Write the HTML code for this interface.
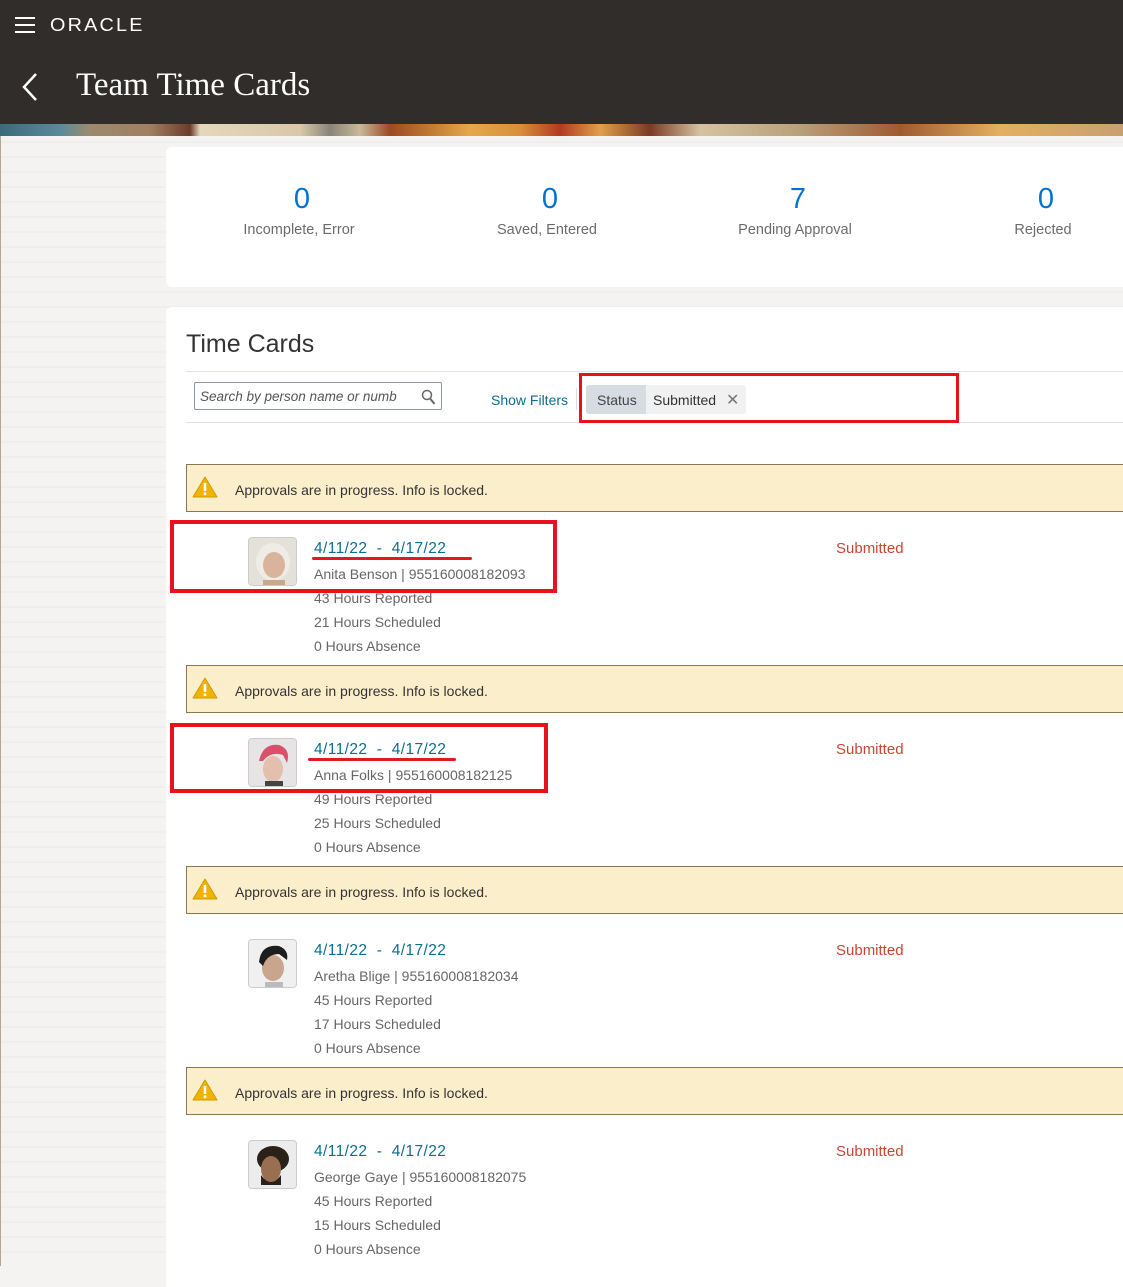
<!DOCTYPE html>
<html><head><meta charset="utf-8"><style>
*{margin:0;padding:0;box-sizing:border-box}
body{width:1123px;height:1266px;overflow:hidden;position:relative;background:#f4f3f1;font-family:"Liberation Sans",sans-serif;color:#555}
.bgtex{left:0;top:136px;width:1123px;height:1130px;background-image:repeating-linear-gradient(0deg,transparent 0 13px,rgba(0,0,0,0.018) 13px 15px)}
.a{position:absolute}
.hdr{left:0;top:0;width:1123px;height:124px;background:#312d2a}
.ban{left:0;top:124px;width:1123px;height:12px;background:linear-gradient(90deg,#3d6a7a 0,#5a8a99 60px,#9c8a6e 90px,#a08060 150px,#6b3b2a 190px,#e3d7bd 200px,#d8c8a8 300px,#8a8478 330px,#c9b89a 360px,#9b4a24 390px,#c07a32 430px,#e6a84a 470px,#d88f3a 520px,#b23a22 560px,#e0a04a 600px,#7a3a24 650px,#d4c3a0 700px,#b8a07a 800px,#a05a30 900px,#e3b060 1000px,#c8a070 1123px)}
.card{background:#fff;border-radius:6px}
.num{font-size:29px;color:#0572ce;width:200px;text-align:center}
.lbl{font-size:14.5px;color:#6b6b6b;width:200px;text-align:center}
.alert{left:186px;width:950px;height:48px;background:#fbeecb;border-top:1px solid #8a7650;border-bottom:1px solid #8a7650;border-left:1px solid #8a7650;font-size:14px;color:#333}
.alert span{position:absolute;left:48px;top:17px}
.av{width:49px;height:49px;border:1px solid #ccc;border-radius:4px;background:#e8e8e8;overflow:hidden}
.dt{font-size:15.5px;color:#0b6e8c;letter-spacing:0.4px}
.t{font-size:14px;color:#666}
.st{font-size:15px;color:#c74634}
.rb{border:3px solid #e8111c}
.ul{height:3px;background:#e01a22;border-radius:2px}
</style></head><body>
<div class="a bgtex"></div>
<div class="a hdr"></div>
<svg class="a" style="left:14px;top:16px" width="22" height="18"><path d="M1 2h20M1 9h20M1 16h20" stroke="#fff" stroke-width="2"/></svg>
<div class="a" style="left:50px;top:15px;color:#fff;font-size:18px;letter-spacing:2px;transform:scaleX(1.1);transform-origin:left">ORACLE</div>
<svg class="a" style="left:20px;top:72px" width="20" height="30"><path d="M16 2L4 15l12 13" stroke="#fff" stroke-width="2.5" fill="none"/></svg>
<div class="a" style="left:76px;top:67px;color:#fff;font-family:'Liberation Serif',serif;font-size:33px">Team Time Cards</div>
<div class="a ban"></div>
<div class="a" style="left:0;top:136px;width:1px;height:1130px;background:#b0a890"></div>

<div class="a card" style="left:166px;top:147px;width:970px;height:140px"></div>
<div class="a num" style="left:202px;top:183px">0</div><div class="a lbl" style="left:199px;top:222px">Incomplete, Error</div>
<div class="a num" style="left:450px;top:183px">0</div><div class="a lbl" style="left:447px;top:222px">Saved, Entered</div>
<div class="a num" style="left:698px;top:183px">7</div><div class="a lbl" style="left:695px;top:222px">Pending Approval</div>
<div class="a num" style="left:946px;top:183px">0</div><div class="a lbl" style="left:943px;top:222px">Rejected</div>

<div class="a card" style="left:166px;top:307px;width:970px;height:980px;border-radius:6px 0 0 0"></div>
<div class="a" style="left:186px;top:330px;font-size:25px;color:#333">Time Cards</div>
<div class="a" style="left:186px;top:371px;width:940px;height:1px;background:#dfe3e6"></div>
<div class="a" style="left:186px;top:422px;width:940px;height:1px;background:#dfe3e6"></div>
<div class="a" style="left:194px;top:382px;width:248px;height:28px;border:1px solid #8a96a0;border-radius:2px"></div>
<div class="a" style="left:200px;top:389px;font-size:13.5px;font-style:italic;color:#555">Search by person name or numb</div>
<svg class="a" style="left:421px;top:389px" width="16" height="18"><circle cx="6" cy="6" r="4.5" stroke="#666" stroke-width="1.5" fill="none"/><path d="M9.5 10l4 5" stroke="#666" stroke-width="2"/></svg>
<div class="a" style="left:491px;top:392px;font-size:14px;color:#0b6e8c">Show Filters</div>
<div class="a" style="left:576px;top:388px;width:1px;height:22px;background:#ddd"></div>
<div class="a" style="left:586px;top:385px;width:60px;height:29px;background:#d5dde3;border-radius:3px 0 0 3px"></div>
<div class="a" style="left:646px;top:385px;width:100px;height:29px;background:#f1f1f1;border-radius:0 3px 3px 0"></div>
<div class="a" style="left:597px;top:392px;font-size:14px;color:#444">Status</div>
<div class="a" style="left:653px;top:392px;font-size:14px;color:#333">Submitted</div>
<div class="a" style="left:726px;top:390px;font-size:16px;color:#777">✕</div>

<div class="a alert" style="top:464px"><svg class="a" style="left:5px;top:10px" width="26" height="24"><path d="M13 2L25 22H1z" fill="#f0b400" stroke="#d09a00" stroke-linejoin="round"/><rect x="11.7" y="8" width="2.6" height="8" fill="#fff"/><rect x="11.7" y="17.5" width="2.6" height="2.6" fill="#fff"/></svg><span>Approvals are in progress. Info is locked.</span></div>
<div class="a alert" style="top:665px"><svg class="a" style="left:5px;top:10px" width="26" height="24"><path d="M13 2L25 22H1z" fill="#f0b400" stroke="#d09a00" stroke-linejoin="round"/><rect x="11.7" y="8" width="2.6" height="8" fill="#fff"/><rect x="11.7" y="17.5" width="2.6" height="2.6" fill="#fff"/></svg><span>Approvals are in progress. Info is locked.</span></div>
<div class="a alert" style="top:866px"><svg class="a" style="left:5px;top:10px" width="26" height="24"><path d="M13 2L25 22H1z" fill="#f0b400" stroke="#d09a00" stroke-linejoin="round"/><rect x="11.7" y="8" width="2.6" height="8" fill="#fff"/><rect x="11.7" y="17.5" width="2.6" height="2.6" fill="#fff"/></svg><span>Approvals are in progress. Info is locked.</span></div>
<div class="a alert" style="top:1067px"><svg class="a" style="left:5px;top:10px" width="26" height="24"><path d="M13 2L25 22H1z" fill="#f0b400" stroke="#d09a00" stroke-linejoin="round"/><rect x="11.7" y="8" width="2.6" height="8" fill="#fff"/><rect x="11.7" y="17.5" width="2.6" height="2.6" fill="#fff"/></svg><span>Approvals are in progress. Info is locked.</span></div>

<div class="a av" style="left:248px;top:537px"><svg width="49" height="49"><rect width="49" height="49" fill="#e4e0da"/><ellipse cx="24" cy="24" rx="17" ry="19" fill="#efece6"/><ellipse cx="25" cy="27" rx="11" ry="13" fill="#d9b49c"/><rect x="14" y="42" width="22" height="8" fill="#c9a890"/></svg></div>
<div class="a dt" style="left:314px;top:540px">4/11/22 &nbsp;- &nbsp;4/17/22</div>
<div class="a t" style="left:314px;top:566px">Anita Benson | 955160008182093</div>
<div class="a t" style="left:314px;top:590px">43 Hours Reported</div>
<div class="a t" style="left:314px;top:614px">21 Hours Scheduled</div>
<div class="a t" style="left:314px;top:638px">0 Hours Absence</div>
<div class="a st" style="left:836px;top:540px">Submitted</div>

<div class="a av" style="left:248px;top:738px"><svg width="49" height="49"><rect width="49" height="49" fill="#e6e4e4"/><ellipse cx="24" cy="30" rx="10" ry="13" fill="#e3bfae"/><path d="M10 22Q14 4 30 6Q42 10 38 24L34 16Q22 12 14 22z" fill="#d8506a"/><rect x="16" y="42" width="18" height="8" fill="#444"/></svg></div>
<div class="a dt" style="left:314px;top:741px">4/11/22 &nbsp;- &nbsp;4/17/22</div>
<div class="a t" style="left:314px;top:767px">Anna Folks | 955160008182125</div>
<div class="a t" style="left:314px;top:791px">49 Hours Reported</div>
<div class="a t" style="left:314px;top:815px">25 Hours Scheduled</div>
<div class="a t" style="left:314px;top:839px">0 Hours Absence</div>
<div class="a st" style="left:836px;top:741px">Submitted</div>

<div class="a av" style="left:248px;top:939px"><svg width="49" height="49"><rect width="49" height="49" fill="#f0f0f0"/><ellipse cx="24" cy="28" rx="11" ry="13" fill="#c9a58e"/><path d="M10 22Q12 4 30 6Q40 10 38 20L30 14Q18 14 14 26z" fill="#1d1d1d"/><rect x="16" y="42" width="18" height="8" fill="#bbb"/></svg></div>
<div class="a dt" style="left:314px;top:942px">4/11/22 &nbsp;- &nbsp;4/17/22</div>
<div class="a t" style="left:314px;top:968px">Aretha Blige | 955160008182034</div>
<div class="a t" style="left:314px;top:992px">45 Hours Reported</div>
<div class="a t" style="left:314px;top:1016px">17 Hours Scheduled</div>
<div class="a t" style="left:314px;top:1040px">0 Hours Absence</div>
<div class="a st" style="left:836px;top:942px">Submitted</div>

<div class="a av" style="left:248px;top:1140px"><svg width="49" height="49"><rect width="49" height="49" fill="#ececec"/><ellipse cx="24" cy="18" rx="16" ry="13" fill="#2a2118"/><ellipse cx="22" cy="28" rx="10" ry="13" fill="#9a6e50"/><path d="M12 34Q22 48 32 34L32 44H12z" fill="#2a2118"/></svg></div>
<div class="a dt" style="left:314px;top:1143px">4/11/22 &nbsp;- &nbsp;4/17/22</div>
<div class="a t" style="left:314px;top:1169px">George Gaye | 955160008182075</div>
<div class="a t" style="left:314px;top:1193px">45 Hours Reported</div>
<div class="a t" style="left:314px;top:1217px">15 Hours Scheduled</div>
<div class="a t" style="left:314px;top:1241px">0 Hours Absence</div>
<div class="a st" style="left:836px;top:1143px">Submitted</div>

<div class="a rb" style="left:579px;top:373px;width:380px;height:50px"></div>
<div class="a rb" style="left:170px;top:520px;width:387px;height:73px;border-width:4px"></div>
<div class="a rb" style="left:170px;top:723px;width:378px;height:70px;border-width:4px"></div>
<div class="a ul" style="left:312px;top:557px;width:160px"></div>
<div class="a ul" style="left:308px;top:758px;width:148px"></div>
</body></html>
